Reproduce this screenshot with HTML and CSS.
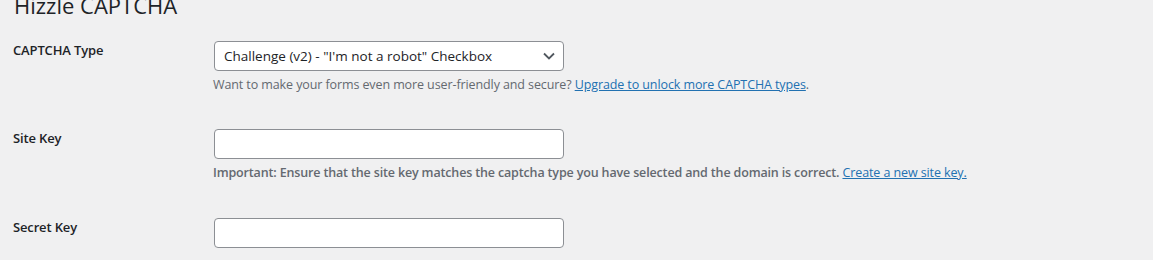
FILE: index.html
```html
<!DOCTYPE html>
<html>
<head>
<meta charset="utf-8">
<link rel="stylesheet" href="styles.css">
</head>
<body>
<div class="wrap">
  <h1 class="title">Hizzle CAPTCHA</h1>
  <div class="form">
    <div class="row">
      <div class="label">CAPTCHA Type</div>
      <div class="field">
        <div class="select">
          <span>Challenge (v2) - "I'm not a robot" Checkbox</span>
          <svg class="chev" width="16" height="16" viewBox="0 0 16 16"><path d="M3 5.5 L8 10.5 L13 5.5" fill="none" stroke="#50575e" stroke-width="1.8"/></svg>
        </div>
        <p class="desc">Want to make your forms even more user-friendly and secure? <a href="#">Upgrade to unlock more CAPTCHA types</a>.</p>
      </div>
    </div>
    <div class="row">
      <div class="label">Site Key</div>
      <div class="field">
        <div class="input"></div>
        <p class="desc"><strong>Important: Ensure that the site key matches the captcha type you have selected and the domain is correct.</strong> <a href="#">Create a new site key.</a></p>
      </div>
    </div>
    <div class="row">
      <div class="label">Secret Key</div>
      <div class="field">
        <div class="input"></div>
      </div>
    </div>
  </div>
</div>
</body>
</html>
```
FILE: styles.css
```css
html, body {
  margin: 0;
  padding: 0;
  background: #f0f0f1;
  color: #1d2327;
  font-family: "Open Sans", "Noto Sans", sans-serif;
  overflow: hidden;
}
.wrap {
  padding-left: 13px;
}
.title {
  margin: -9px 0 0 1px;
  font-size: 22px;
  font-weight: 400;
  line-height: 29px;
  color: #1d2327;
}
.form {
  margin-top: 21px;
}
.row {
  display: flex;
  margin-bottom: 36px;
}
.row:first-child { margin-bottom: 35px; }
.label {
  width: 201px;
  flex: none;
  font-size: 13px;
  letter-spacing: -0.15px;
  font-weight: 600;
  line-height: 18px;
  padding-top: 0;
}
.field {
  flex: 1;
}
.select, .input {
  box-sizing: border-box;
  width: 350px;
  height: 30px;
  background: #fff;
  border: 1px solid #8c8f94;
  border-radius: 4px;
}
.select {
  display: flex;
  align-items: center;
  justify-content: space-between;
  padding: 0 6px 0 9px;
  font-size: 13.5px;
}
.chev { display: block; }
.desc {
  margin: 4px 0 0 -1px;
  font-size: 12.5px;
  letter-spacing: -0.1px;
  line-height: 19px;
  color: #646970;
}
.desc strong {
  font-weight: 600;
  letter-spacing: -0.15px;
}
.desc a {
  color: #2271b1;
  text-decoration: underline;
}
```
